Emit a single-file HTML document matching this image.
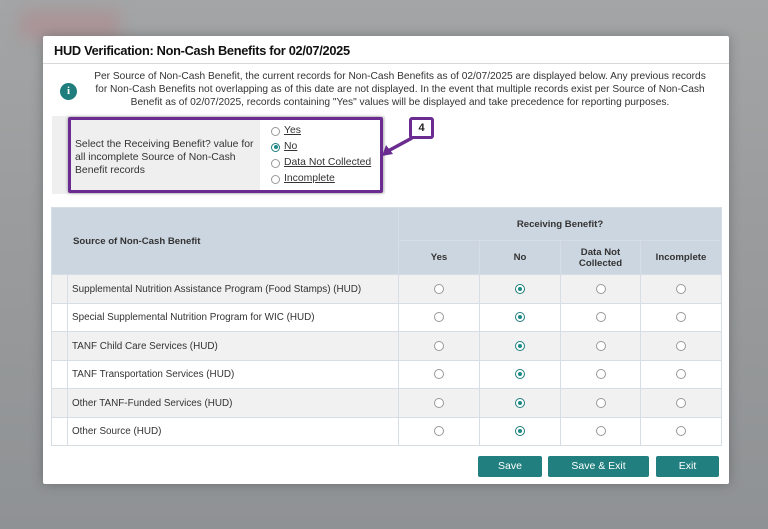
<!DOCTYPE html>
<html><head><style>
*{box-sizing:border-box;margin:0;padding:0}
body{width:768px;height:529px;overflow:hidden;position:relative;font-family:"Liberation Sans",sans-serif;color:#222;
background:linear-gradient(180deg,#a3a5a6 0%,#9a9c9d 40%,#8f9294 100%)}
.bg1{position:absolute;left:20px;top:10px;width:100px;height:30px;background:#b08a8e;filter:blur(8px);opacity:.6}
.modal{position:absolute;left:43px;top:36px;width:686px;height:448px;background:#fff;border-radius:2px;box-shadow:0 0 12px rgba(0,0,0,.25)}
.title{height:28px;border-bottom:1px solid #d8d8d8;padding:7px 0 0 11px;font-size:12.8px;font-weight:bold;letter-spacing:-.3px;color:#111}
.info{position:absolute;left:17px;top:47px;width:17px;height:17px;border-radius:50%;background:#1f7d7e;color:#fff;font-size:11px;font-weight:bold;text-align:center;line-height:17px;font-family:"Liberation Serif",serif}
.msg{position:absolute;left:30px;top:35px;width:654px;text-align:center;font-size:10.2px;line-height:12.8px;color:#333;white-space:nowrap}
.sel{position:absolute;left:9px;top:80px;width:333px;height:78px;background:#efefef}
.selbox{position:absolute;left:25px;top:81px;width:315px;height:76px;border:3px solid #6a2c91;border-radius:2px;box-shadow:0 0 3px rgba(0,0,0,.4)}
.selbox .w{position:absolute;left:189px;top:0;right:0;bottom:0;background:#fff}
.seltxt{position:absolute;left:4px;top:18px;width:182px;font-size:10.4px;line-height:13px;color:#333}
.opts{position:absolute;font-size:10.4px;line-height:16px}
.opts div{display:flex;align-items:center}
.opts u{color:#333}
.r{display:inline-block;width:9px;height:9px;border:1px solid #999;border-radius:50%;background:#fff;position:relative}
.opts .r{margin-right:4px}
.r.on{border-color:#1f7d7e}
.r.on:after{content:"";position:absolute;left:1.5px;top:1.5px;width:4px;height:4px;border-radius:50%;background:#1f8a88}
.tr .r{width:10px;height:10px;display:block;margin:0 auto}
.tr .r.on:after{left:2px;top:2px;width:4px;height:4px}
.four{position:absolute;left:366px;top:81px;width:25px;height:22px;border:3px solid #6a2c91;border-radius:3px;background:#fff;font-size:11px;font-weight:bold;text-align:center;line-height:16px}
table{position:absolute;left:8px;top:171px;width:671px;border-collapse:collapse;font-size:9.9px}
td,th{border:1px solid #d7dde5;vertical-align:middle}
th{background:#ccd6e0;font-weight:bold;color:#333;font-size:9.6px}
tbody tr{height:28.5px}
tbody tr:nth-child(odd){background:#f1f1f1}
td.c{text-align:center}
td.s{padding:2px 0 0 4px;color:#333;line-height:12px}
.btn{position:absolute;top:420px;height:21px;background:#21807f;color:#fff;font-size:10.5px;text-align:center;line-height:21px;border-radius:2px}
</style></head><body>
<div class="bg1"></div>
<div class="modal">
<div class="title">HUD Verification: Non-Cash Benefits for 02/07/2025</div>
<div class="info">i</div>
<div class="msg">Per Source of Non-Cash Benefit, the current records for Non-Cash Benefits as of 02/07/2025 are displayed below. Any previous records<br>for Non-Cash Benefits not overlapping as of this date are not displayed. In the event that multiple records exist per Source of Non-Cash<br>Benefit as of 02/07/2025, records containing "Yes" values will be displayed and take precedence for reporting purposes.</div>
<div class="sel"></div>
<div class="selbox"><div class="w"></div>
<div class="seltxt">Select the Receiving Benefit? value for all incomplete Source of Non-Cash Benefit records</div>
</div>
<div class="opts" style="left:228px;top:87px">
<div><span class="r"></span><u>Yes</u></div>
<div><span class="r on"></span><u>No</u></div>
<div><span class="r"></span><u>Data Not Collected</u></div>
<div><span class="r"></span><u>Incomplete</u></div>
</div>
<div class="four">4</div>
<svg style="position:absolute;left:335px;top:95px" width="40" height="30"><path d="M34 7 L10 20" stroke="#6a2c91" stroke-width="3.5" fill="none"/><path d="M4 25 L8 14 L15 23 Z" fill="#6a2c91"/></svg>
<table>
<thead>
<tr style="height:33px"><th colspan="2" rowspan="2" style="text-align:left;padding-left:21px">Source of Non-Cash Benefit</th><th colspan="4">Receiving Benefit?</th></tr>
<tr style="height:34px"><th style="width:81px">Yes</th><th style="width:81px">No</th><th style="width:80px">Data Not<br>Collected</th><th style="width:81px">Incomplete</th></tr>
</thead>
<tbody class="tr">
<tr><td style="width:16px"></td><td class="s">Supplemental Nutrition Assistance Program (Food Stamps) (HUD)</td><td class="c"><span class="r"></span></td><td class="c"><span class="r on"></span></td><td class="c"><span class="r"></span></td><td class="c"><span class="r"></span></td></tr>
<tr><td></td><td class="s">Special Supplemental Nutrition Program for WIC (HUD)</td><td class="c"><span class="r"></span></td><td class="c"><span class="r on"></span></td><td class="c"><span class="r"></span></td><td class="c"><span class="r"></span></td></tr>
<tr><td></td><td class="s">TANF Child Care Services (HUD)</td><td class="c"><span class="r"></span></td><td class="c"><span class="r on"></span></td><td class="c"><span class="r"></span></td><td class="c"><span class="r"></span></td></tr>
<tr><td></td><td class="s">TANF Transportation Services (HUD)</td><td class="c"><span class="r"></span></td><td class="c"><span class="r on"></span></td><td class="c"><span class="r"></span></td><td class="c"><span class="r"></span></td></tr>
<tr><td></td><td class="s">Other TANF-Funded Services (HUD)</td><td class="c"><span class="r"></span></td><td class="c"><span class="r on"></span></td><td class="c"><span class="r"></span></td><td class="c"><span class="r"></span></td></tr>
<tr><td></td><td class="s">Other Source (HUD)</td><td class="c"><span class="r"></span></td><td class="c"><span class="r on"></span></td><td class="c"><span class="r"></span></td><td class="c"><span class="r"></span></td></tr>
</tbody>
</table>
<div class="btn" style="left:435px;width:64px">Save</div>
<div class="btn" style="left:505px;width:101px">Save &amp; Exit</div>
<div class="btn" style="left:613px;width:63px">Exit</div>
</div>
</body></html>
